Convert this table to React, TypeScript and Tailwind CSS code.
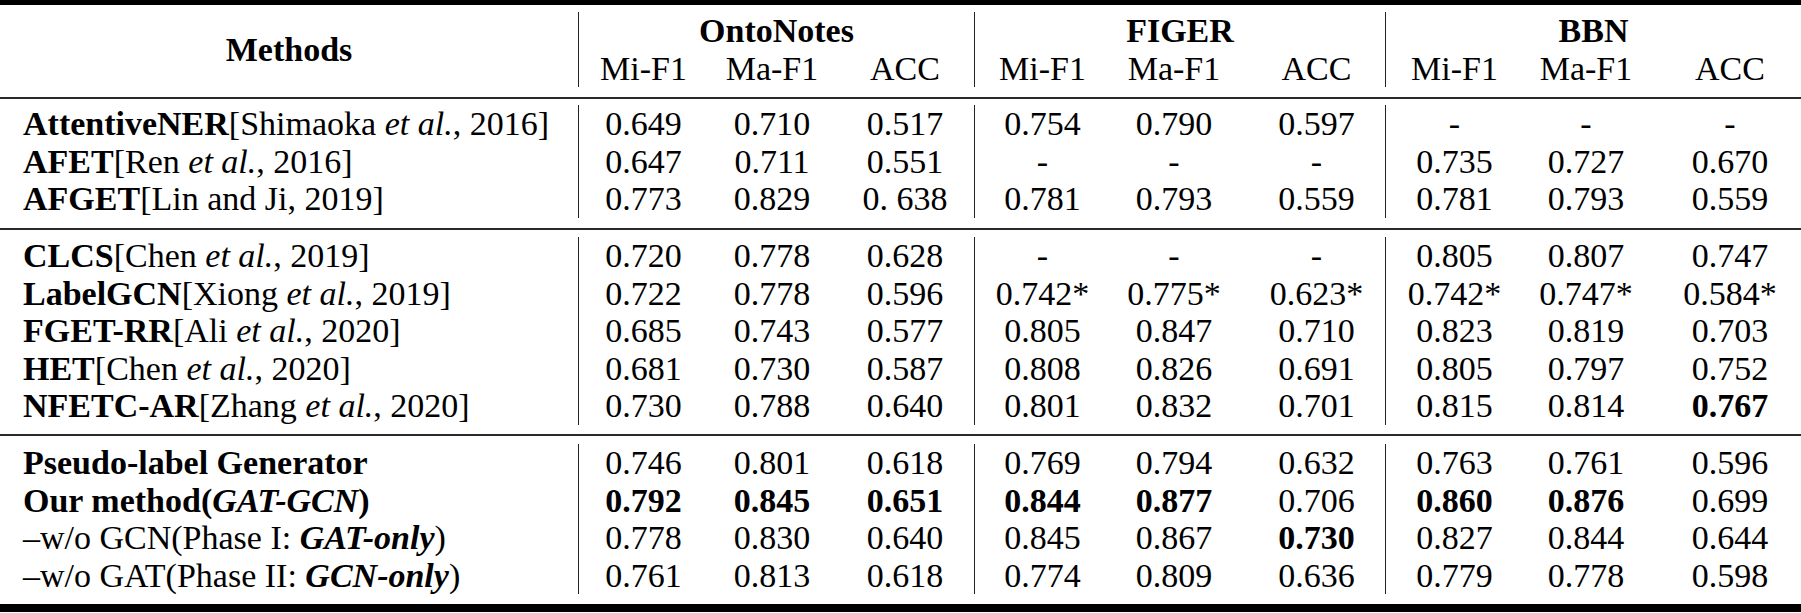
import type { ReactNode } from "react";

type Cell = { v: string; b?: boolean };

type Row = { method: ReactNode; cells: Cell[] };

const GRID =
  "grid grid-cols-[578px_130px_128px_138px_136px_128px_147px_138px_126px_152px]";

// class per value column (OntoNotes x3, FIGER x3, BBN x3)
const CELL_CLS = [
  "border-l border-[#222] text-center",
  "text-center",
  "text-center",
  "border-l border-[#222] text-center",
  "text-center",
  "text-center pl-[10px]",
  "border-l border-[#222] text-center",
  "text-center",
  "text-center pl-[10px]",
];

function c(...vals: string[]): Cell[] {
  return vals.map((v) => {
    if (v.startsWith("!")) return { v: v.slice(1), b: true };
    return { v };
  });
}

function Ref({ name, who, etal, year }: { name: string; who: string; etal?: boolean; year: string }) {
  return (
    <>
      <b>{name}</b>[{who}
      {etal && (
        <>
          {" "}
          <i>et al.</i>
        </>
      )}
      , {year}]
    </>
  );
}

const groups: Row[][] = [
  [
    {
      method: <Ref name="AttentiveNER" who="Shimaoka" etal year="2016" />,
      cells: c("0.649", "0.710", "0.517", "0.754", "0.790", "0.597", "-", "-", "-"),
    },
    {
      method: <Ref name="AFET" who="Ren" etal year="2016" />,
      cells: c("0.647", "0.711", "0.551", "-", "-", "-", "0.735", "0.727", "0.670"),
    },
    {
      method: <Ref name="AFGET" who="Lin and Ji" year="2019" />,
      cells: c("0.773", "0.829", "0. 638", "0.781", "0.793", "0.559", "0.781", "0.793", "0.559"),
    },
  ],
  [
    {
      method: <Ref name="CLCS" who="Chen" etal year="2019" />,
      cells: c("0.720", "0.778", "0.628", "-", "-", "-", "0.805", "0.807", "0.747"),
    },
    {
      method: <Ref name="LabelGCN" who="Xiong" etal year="2019" />,
      cells: c("0.722", "0.778", "0.596", "0.742*", "0.775*", "0.623*", "0.742*", "0.747*", "0.584*"),
    },
    {
      method: <Ref name="FGET-RR" who="Ali" etal year="2020" />,
      cells: c("0.685", "0.743", "0.577", "0.805", "0.847", "0.710", "0.823", "0.819", "0.703"),
    },
    {
      method: <Ref name="HET" who="Chen" etal year="2020" />,
      cells: c("0.681", "0.730", "0.587", "0.808", "0.826", "0.691", "0.805", "0.797", "0.752"),
    },
    {
      method: <Ref name="NFETC-AR" who="Zhang" etal year="2020" />,
      cells: c("0.730", "0.788", "0.640", "0.801", "0.832", "0.701", "0.815", "0.814", "!0.767"),
    },
  ],
  [
    {
      method: <b>Pseudo-label Generator</b>,
      cells: c("0.746", "0.801", "0.618", "0.769", "0.794", "0.632", "0.763", "0.761", "0.596"),
    },
    {
      method: (
        <b>
          Our method(<i>GAT-GCN</i>)
        </b>
      ),
      cells: c("!0.792", "!0.845", "!0.651", "!0.844", "!0.877", "0.706", "!0.860", "!0.876", "0.699"),
    },
    {
      method: (
        <>
          –w/o GCN(Phase I:{" "}
          <b>
            <i>GAT-only</i>
          </b>
          )
        </>
      ),
      cells: c("0.778", "0.830", "0.640", "0.845", "0.867", "!0.730", "0.827", "0.844", "0.644"),
    },
    {
      method: (
        <>
          –w/o GAT(Phase II:{" "}
          <b>
            <i>GCN-only</i>
          </b>
          )
        </>
      ),
      cells: c("0.761", "0.813", "0.618", "0.774", "0.809", "0.636", "0.779", "0.778", "0.598"),
    },
  ],
];

const groupPad = ["pt-[6px] pb-[10px]", "pt-[7px] pb-[9px]", "pt-[8px] pb-[10px]"];

const subHeads = ["Mi-F1", "Ma-F1", "ACC"];

export default function App() {
  return (
    <div className="w-[1801px] h-[613px] bg-white text-black font-['Liberation_Serif',serif] text-[34px] leading-[37.6px] overflow-hidden">
      <div className="h-[5px] bg-black" />

      {/* header */}
      <div className="pt-[7px] pb-[10px]">
        <div className={GRID}>
          <div className="row-span-2 flex items-center justify-center font-bold">Methods</div>
          <div className="col-span-3 border-l border-[#222] text-center font-bold">OntoNotes</div>
          <div className="col-span-3 border-l border-[#222] text-center font-bold">FIGER</div>
          <div className="col-span-3 border-l border-[#222] text-center font-bold">BBN</div>
          {[0, 1, 2].flatMap((g) =>
            subHeads.map((h, i) => (
              <div key={`${g}-${i}`} className={CELL_CLS[g * 3 + i]}>
                {h}
              </div>
            ))
          )}
        </div>
      </div>

      {groups.map((rows, gi) => (
        <div key={gi}>
          <div className="h-[2px] bg-[#2a2a2a]" />
          <div className={groupPad[gi]}>
            <div className={GRID}>
              {rows.map((r, ri) => (
                <div key={ri} className="contents">
                  <div className="pl-[23px] whitespace-nowrap">{r.method}</div>
                  {r.cells.map((cell, ci) => (
                    <div key={ci} className={`${CELL_CLS[ci]} ${cell.b ? "font-bold" : ""}`}>
                      {cell.v}
                    </div>
                  ))}
                </div>
              ))}
            </div>
          </div>
        </div>
      ))}

      <div className="h-[8px] bg-black" />
    </div>
  );
}
